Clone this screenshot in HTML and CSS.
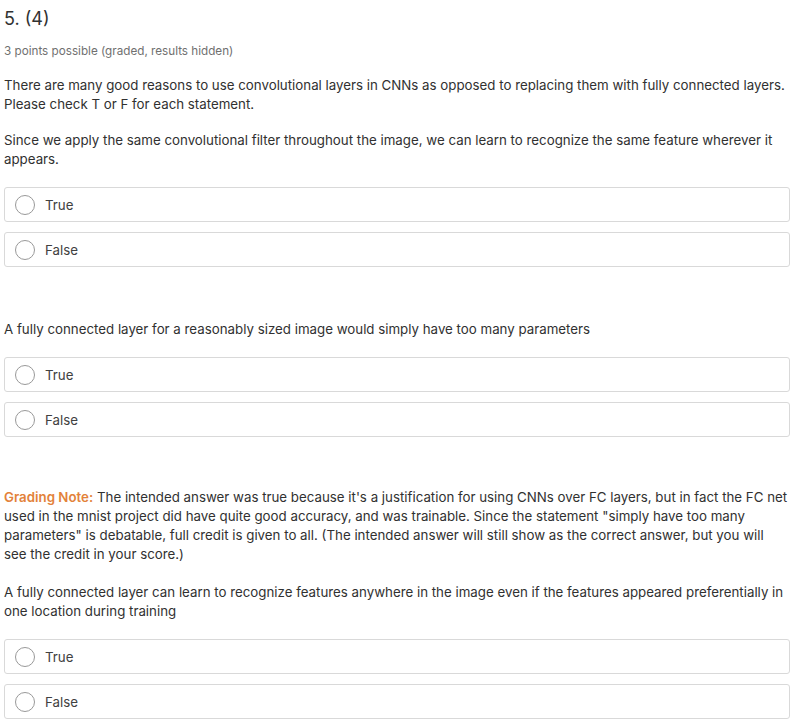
FILE: index.html
```html
<!DOCTYPE html>
<html>
<head>
<meta charset="utf-8">
<link rel="stylesheet" href="styles.css">
</head>
<body>
<div class="problem">
  <h3 class="title">5. (4)</h3>
  <div class="points">3 points possible (graded, results hidden)</div>
  <p class="text">There are many good reasons to use convolutional layers in CNNs as opposed to replacing them with fully connected layers. Please check T or F for each statement.</p>
  <p class="text">Since we apply the same convolutional filter throughout the image, we can learn to recognize the same feature wherever it appears.</p>
  <div class="choices">
    <label class="choice"><span class="radio"></span>True</label>
    <label class="choice"><span class="radio"></span>False</label>
  </div>
  <p class="text q2">A fully connected layer for a reasonably sized image would simply have too many parameters</p>
  <div class="choices">
    <label class="choice"><span class="radio"></span>True</label>
    <label class="choice"><span class="radio"></span>False</label>
  </div>
  <p class="text note"><strong class="note-label">Grading Note:</strong> The intended answer was true because it's a justification for using CNNs over FC layers, but in fact the FC net used in the mnist project did have quite good accuracy, and was trainable. Since the statement "simply have too many parameters" is debatable, full credit is given to all. (The intended answer will still show as the correct answer, but you will<br>see the credit in your score.)</p>
  <p class="text last">A fully connected layer can learn to recognize features anywhere in the image even if the features appeared preferentially in one location during training</p>
  <div class="choices">
    <label class="choice"><span class="radio"></span>True</label>
    <label class="choice"><span class="radio"></span>False</label>
  </div>
</div>
</body>
</html>
```
FILE: styles.css
```css
html, body {
  margin: 0;
  padding: 0;
  background: #fff;
}
body {
  font-family: Inter, "Open Sans", sans-serif;
  color: #313131;
  overflow: hidden;
}
.problem {
  width: 786px;
  padding: 0 4px;
}
.title {
  font-size: 18px;
  font-weight: 400;
  line-height: 22px;
  margin: 8px 0 0;
  color: #313131;
}
.points {
  font-size: 11.7px;
  line-height: 16px;
  color: #707070;
  margin-top: 13px;
}
.text {
  font-size: 13.3px;
  line-height: 19px;
  margin: 17px 0 0;
}
.choices {
  display: flex;
  flex-direction: column;
  gap: 10px;
  margin-top: 18px;
}
.choice {
  display: flex;
  align-items: center;
  gap: 10px;
  height: 35px;
  box-sizing: border-box;
  border: 1px solid #d9d9d9;
  border-radius: 3px;
  padding-left: 10px;
  font-size: 13.3px;
  color: #414141;
}
.radio {
  width: 20px;
  height: 20px;
  border: 1px solid #999;
  border-radius: 50%;
  box-sizing: border-box;
  flex: none;
}
.q2 {
  margin-top: 53px;
}
.note {
  margin-top: 51px;
}
.last {
  margin-top: 19px;
}
.note-label {
  color: #e3823a;
  font-weight: 600;
}
```
